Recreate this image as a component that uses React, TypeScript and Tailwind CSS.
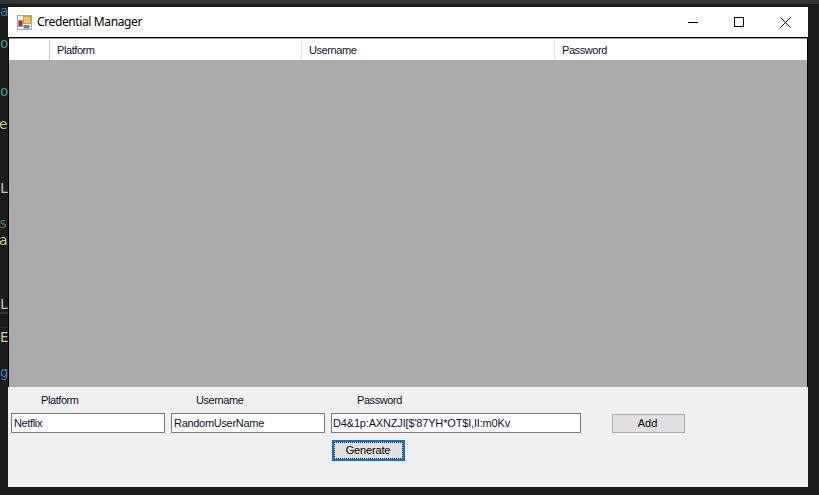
const F = "font-['Liberation_Sans',Arial,sans-serif]";

function Glyph({ c, x, y, color }: { c: string; x: number; y: number; color: string }) {
  return (
    <span className="absolute font-['DejaVu_Sans_Mono',monospace] text-[14px] leading-[16px]" style={{ left: x, top: y, color }}>
      {c}
    </span>
  );
}

export default function App() {
  return (
    <div className={`relative w-[819px] h-[495px] overflow-hidden bg-[#1b1b1b] ${F}`}>
      <div className="mb-[3px] h-[4px] bg-[#333333]" />
      <Glyph c="a" x={0} y={3} color="#3a7fb8" />
      <Glyph c="o" x={0} y={35} color="#35a090" />
      <Glyph c="o" x={0} y={83} color="#35a090" />
      <Glyph c="e" x={-1} y={116} color="#cfc596" />
      <Glyph c="L" x={0} y={180} color="#cfc596" />
      <Glyph c="s" x={-1} y={215} color="#4a8a50" />
      <Glyph c="a" x={-1} y={232} color="#cfc596" />
      <Glyph c="L" x={0} y={296} color="#cfc596" />
      <Glyph c="E" x={0} y={329} color="#cfc596" />
      <Glyph c="g" x={0} y={364} color="#3a7fb8" />
      <div className="absolute left-0 top-[312px] h-[2px] w-[8px] bg-[#333333]" />
      <div className="absolute left-0 top-[327px] h-[1px] w-[8px] bg-[#333333]" />

      <div className="relative ml-[8px] flex h-[480px] w-[800px] flex-col bg-white">
        <div className="flex h-[30px] items-center bg-white pl-[9px]">
          <svg width="15" height="15" viewBox="0 0 15 15" className="mr-[5px]">
            <rect x="0.5" y="0.5" width="14" height="14" fill="#f4f4f4" stroke="#a8a8a8" />
            <rect x="1.5" y="5.5" width="4" height="6" fill="#c8281e" stroke="#9a9a9a" strokeWidth="0.8" />
            <rect x="6.5" y="1.5" width="7" height="7" fill="#f7c93e" stroke="#b89a40" strokeWidth="0.8" />
            <rect x="6.5" y="10" width="6" height="3.5" fill="#4a86e0" />
          </svg>
          <span className="font-['Noto_Sans',sans-serif] text-[12px] tracking-[-0.38px] text-black">Credential Manager</span>
          <div className="ml-auto flex h-full items-center">
            <div className="flex w-[46px] justify-center">
              <svg width="10" height="10" viewBox="0 0 10 10"><path d="M0 5.5H10" stroke="#000" /></svg>
            </div>
            <div className="flex w-[46px] justify-center">
              <svg width="10" height="10" viewBox="0 0 10 10"><rect x="0.5" y="0.5" width="9" height="9" fill="none" stroke="#000" /></svg>
            </div>
            <div className="flex w-[46px] justify-center">
              <svg width="11" height="11" viewBox="0 0 11 11"><path d="M0.5 0.5L10.5 10.5M10.5 0.5L0.5 10.5" stroke="#000" /></svg>
            </div>
          </div>
        </div>

        <div className="flex flex-1 flex-col border-x border-t border-black bg-[#ababab]">
          <div className="flex h-[22px] border-t border-[#a0a0a0] bg-white pt-[1px] text-[11px] tracking-[-0.42px] text-[#111133]">
            <div className="w-[41px] border-r border-[#c8c8c8]" />
            <div className="flex w-[252px] items-center border-r border-[#e2e2e2] pl-[7px]">Platform</div>
            <div className="flex w-[253px] items-center border-r border-[#e2e2e2] pl-[7px]">Username</div>
            <div className="flex flex-1 items-center pl-[7px]">Password</div>
          </div>
        </div>

        <div className="flex h-[100px] flex-col bg-[#f0f0f0] text-[11px] text-[#111133]">
          <div className="flex h-[26px] items-center tracking-[-0.42px]">
            <span className="ml-[33px] w-[155px]">Platform</span>
            <span className="w-[161px]">Username</span>
            <span>Password</span>
          </div>
          <div className="flex items-center">
            <input readOnly value="Netflix" className="ml-[3px] h-[20px] w-[154px] border border-[#7a7a7a] bg-white px-[2px] tracking-[-0.35px] outline-none" />
            <input readOnly value="RandomUserName" className="ml-[6px] h-[20px] w-[154px] border border-[#7a7a7a] bg-white px-[2px] tracking-[-0.3px] outline-none" />
            <input readOnly value={"D4&1p:AXNZJI[$'87YH*OT$I,II:m0Kv"} className="ml-[6px] h-[20px] w-[250px] border border-[#7a7a7a] bg-white px-[1px] tracking-[-0.17px] outline-none" />
            <button className="ml-[31px] h-[19px] w-[73px] border border-[#adadad] bg-[#e1e1e1] pr-[2px] text-black">Add</button>
          </div>
          <div className="mt-[7px] ml-[324px] flex h-[21px] w-[73px] border-2 border-[#0078d7] bg-[#e1e1e1]">
            <button className="flex flex-1 items-start justify-center border border-dotted border-black pr-[1px] leading-[15px] tracking-[-0.15px] text-black">Generate</button>
          </div>
        </div>
      </div>
    </div>
  );
}
